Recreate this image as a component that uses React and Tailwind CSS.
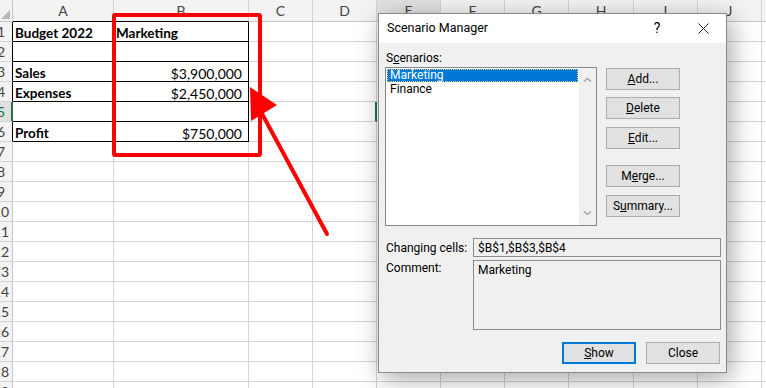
import { Fragment } from 'react'

// ─── Sheet layout ─────────────────────────────────────────────────────────────
const COLS = [
  { key: 'A', w: 'w-[101px]' },
  { key: 'B', w: 'w-[135px]' },
  { key: 'C', w: 'w-[64px]' },
  { key: 'D', w: 'w-[64px]' },
  { key: 'E', w: 'w-[64px]' },
  { key: 'F', w: 'w-[64px]' },
  { key: 'G', w: 'w-[64px]' },
  { key: 'H', w: 'w-[65px]' },
  { key: 'I', w: 'w-[64px]' },
  { key: 'J', w: 'w-[64px]' },
  { key: 'K', w: 'w-[40px]' },
]

const CELLS = {
  1: { A: 'Budget 2022', B: 'Marketing' },
  3: { A: 'Sales', B: '$3,900,000' },
  4: { A: 'Expenses', B: '$2,450,000' },
  6: { A: 'Profit', B: '$750,000' },
}

const ROWS = Array.from({ length: 19 }, (_, i) => i + 1)

function HeaderRow() {
  return (
    <div className="flex h-[22px]">
      <div className="relative w-[13px] shrink-0 bg-[#f3f3f3] border-r border-b border-[#c6c6c6]">
        <div className="absolute right-[2px] bottom-[2px] w-0 h-0 border-l-[9px] border-l-transparent border-b-[9px] border-b-[#b7b7b7]" />
      </div>
      {COLS.map((c) => {
        const inTable = c.key === 'A' || c.key === 'B'
        const active = c.key === 'E'
        return (
          <div
            key={c.key}
            className={`${c.w} shrink-0 flex items-center justify-center text-[14px] text-[#444] border-r border-r-[#d4d4d4] border-b ${
              inTable ? 'border-b-black' : 'border-b-[#c6c6c6]'
            } ${active ? 'bg-[#e1e1e1]' : 'bg-[#f3f3f3]'}`}
          >
            {c.key === 'K' ? '' : c.key}
          </div>
        )
      })}
    </div>
  )
}

function SheetRow({ n }) {
  const inTable = n <= 6
  const active = n === 5
  const data = CELLS[n] ?? {}
  return (
    <div className="flex h-[20px]">
      <div
        className={`w-[13px] shrink-0 overflow-hidden border-b border-b-[#d4d4d4] ${
          active
            ? 'border-r-2 border-r-[#217346] bg-[#e1e1e1] text-[#217346]'
            : inTable
              ? 'border-r border-r-black bg-[#f3f3f3] text-[#444]'
              : 'border-r border-r-[#c6c6c6] bg-[#f3f3f3] text-[#444]'
        }`}
      >
        <div className="w-[26px] ml-[-12px] text-center text-[14px] leading-[20px]">
          {n}
        </div>
      </div>
      {COLS.map((c) => {
        const tableCell = inTable && (c.key === 'A' || c.key === 'B')
        const value = data[c.key]
        const isNumber = value && value.startsWith('$')
        const activeEdge = active && c.key === 'D'
        return (
          <div
            key={c.key}
            className={`${c.w} shrink-0 flex items-center pt-[3px] text-[13.5px] text-black bg-white border-b ${
              tableCell ? 'border-b-black' : 'border-b-[#d4d4d4]'
            } ${
              activeEdge
                ? 'border-r-2 border-r-[#217346]'
                : tableCell
                  ? 'border-r border-r-black'
                  : 'border-r border-r-[#d4d4d4]'
            } ${isNumber ? 'justify-end pr-[6px] text-[14px]' : 'pl-[2px] font-bold'}`}
          >
            {value}
          </div>
        )
      })}
    </div>
  )
}

// ─── Dialog bits ──────────────────────────────────────────────────────────────
function Btn({ children, primary, className = '' }) {
  return (
    <div
      className={`w-[74px] h-[22px] flex items-center justify-center bg-[#e1e1e1] ${
        primary ? 'border-2 border-[#0078d7]' : 'border border-[#adadad]'
      } ${className}`}
    >
      {children}
    </div>
  )
}

function Chevron({ down }) {
  return (
    <svg width="9" height="6" viewBox="0 0 9 6" className="mx-auto">
      <path
        d={down ? 'M1 1.5 L4.5 4.5 L8 1.5' : 'M1 4.5 L4.5 1.5 L8 4.5'}
        fill="none"
        stroke="#a6a6a6"
        strokeWidth="1.6"
      />
    </svg>
  )
}

function ScenarioDialog() {
  return (
    <div className="absolute left-[378px] top-[13px] w-[349px] h-[360px] flex flex-col border border-[#8a8a8a] bg-[#f0f0f0] shadow-[4px_6px_24px_rgba(0,0,0,0.35)] font-['Roboto',sans-serif] text-[12px] text-black">
      {/* title bar */}
      <div className="h-[29px] shrink-0 bg-white flex items-center">
        <span className="pl-[8px] text-[12.5px]">Scenario Manager</span>
        <div className="ml-auto flex h-full">
          <div className="w-[46px] flex items-center justify-center text-[14px]">?</div>
          <div className="w-[46px] flex items-center justify-center">
            <svg width="11" height="11" viewBox="0 0 11 11">
              <path d="M0.5 0.5 L10.5 10.5 M10.5 0.5 L0.5 10.5" stroke="#222" strokeWidth="1" />
            </svg>
          </div>
        </div>
      </div>

      {/* body */}
      <div className="flex-1 flex flex-col pl-[6px] pt-[7px]">
        <div className="h-[16px] leading-[16px] pl-[1px]">
          S<span className="underline">c</span>enarios:
        </div>

        <div className="flex mt-[1px]">
          <div className="w-[212px] h-[159px] flex border border-[#828790] bg-white">
            <div className="flex-1 pt-[1px] px-[1px]">
              <div className="h-[13px] leading-[11px] pl-[2px] bg-[#0078d7] text-white border border-dotted border-[#f5c26b]">
                Marketing
              </div>
              <div className="h-[14px] leading-[15px] pl-[3px]">Finance</div>
            </div>
            <div className="w-[17px] bg-[#f0f0f0] flex flex-col justify-between py-[9px]">
              <Chevron />
              <Chevron down />
            </div>
          </div>

          <div className="ml-[9px] pt-[1px] flex flex-col">
            <Btn>
              <span className="underline">A</span>dd...
            </Btn>
            <Btn className="mt-[7px]">
              <span className="underline">D</span>elete
            </Btn>
            <Btn className="mt-[8px]">
              <span className="underline">E</span>dit...
            </Btn>
            <Btn className="mt-[16px]">
              M<span className="underline">e</span>rge...
            </Btn>
            <Btn className="mt-[8px]">
              S<span className="underline">u</span>mmary...
            </Btn>
          </div>
        </div>

        <div className="flex items-center mt-[12px]">
          <div className="w-[88px] pl-[1px]">Changing cells:</div>
          <div className="w-[248px] h-[19px] flex items-center pl-[4px] border border-[#8c8c8c] bg-[#f0f0f0]">
            $B$1,$B$3,$B$4
          </div>
        </div>

        <div className="flex items-start mt-[3px]">
          <div className="w-[88px] pl-[1px] leading-[16px]">Comment:</div>
          <div className="w-[248px] h-[70px] pl-[4px] pt-[1px] leading-[16px] border border-[#8c8c8c] bg-[#f0f0f0]">
            Marketing
          </div>
        </div>

        <div className="flex justify-end gap-[10px] mt-[12px] pr-[6px]">
          <Btn primary>
            <span className="underline">S</span>how
          </Btn>
          <Btn>Close</Btn>
        </div>
      </div>
    </div>
  )
}

// ─── Page ─────────────────────────────────────────────────────────────────────
export default function App() {
  return (
    <div className="relative w-[766px] h-[388px] overflow-hidden bg-white font-['Lato',sans-serif]">
      <HeaderRow />
      {ROWS.map((n) => (
        <Fragment key={n}>
          <SheetRow n={n} />
        </Fragment>
      ))}

      {/* red annotation */}
      <div className="absolute left-[112px] top-[13px] w-[150px] h-[144px] border-[4px] border-[#ff0000] rounded-[3px]" />
      <svg className="absolute left-0 top-0" width="766" height="388">
        <polygon points="250,87 277,105 251,121" fill="#ff0000" />
        <line x1="260" y1="110" x2="327" y2="234" stroke="#ff0000" strokeWidth="4" strokeLinecap="round" />
      </svg>

      <ScenarioDialog />
    </div>
  )
}
